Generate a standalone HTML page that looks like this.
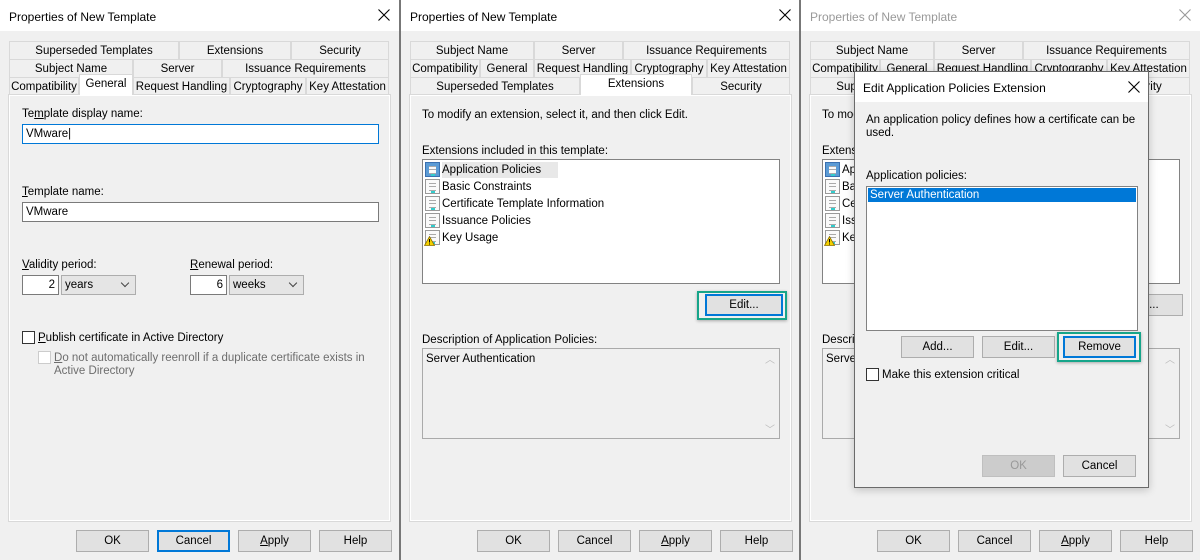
<!DOCTYPE html>
<html><head><meta charset="utf-8"><style>
*{box-sizing:border-box;margin:0;padding:0}
body{width:1200px;height:560px;position:relative;background:#f0f0f0;font-family:"Liberation Sans",sans-serif;font-size:11.5px;color:#000;overflow:hidden}
.a{position:absolute}
.win{position:absolute;top:0;height:560px;width:400px;background:#f0f0f0;border-right:1px solid #777}
.tb{position:absolute;left:0;top:0;width:100%;height:31px;background:#fff}
.tt{position:absolute;left:9px;top:10px;font-size:12px}
.x{position:absolute;top:9px;width:12px;height:12px}
.tab{position:absolute;height:18px;border:1px solid #d9d9d9;border-bottom:none;background:#f0f0f0;text-align:center;line-height:18px;white-space:nowrap}
.tab.sel{background:#fff;height:21px;border-color:#d9d9d9;z-index:2;line-height:18px}
.panel{position:absolute;border:1px solid #d9d9d9;box-shadow:inset 0 0 0 1px #fff;background:#f0f0f0}
.btn{position:absolute;height:22px;border:1px solid #adadad;background:#e1e1e1;text-align:center;line-height:21px}
.btn.def{border:2px solid #0078d7;line-height:19px}
.inp{position:absolute;height:20px;border:1px solid #7a7a7a;background:#fff;padding-left:3px;line-height:19px}
.sel2{position:absolute;height:20px;border:1px solid #adadad;background:#e5e5e5;padding-left:3px;line-height:19px}
.sel2:after{content:"";position:absolute;right:7px;top:4px;width:5px;height:5px;border-right:1px solid #444;border-bottom:1px solid #444;transform:rotate(45deg)}
.lb{position:absolute;border:1px solid #828282;background:#fff}
.cb{position:absolute;width:13px;height:13px;border:1px solid #333;background:#fff}
.ic{position:absolute;width:15px;height:15px;border:1px solid #999;background:#fafafa}
.ic:before{content:"";position:absolute;left:3px;top:3px;width:7px;height:6px;border-top:1px solid #aaa;border-bottom:1px solid #aaa;background:linear-gradient(#fafafa 2px,#aaa 2px,#aaa 3px,#fafafa 3px)}
.ic:after{content:"";position:absolute;left:5px;bottom:0;width:4px;height:2px;background:#3cc}
.ic.blue{background:#5b9bd5;border-color:#3a70b0}
.warn{position:absolute;width:11px;height:10px}
.teal{position:absolute;border:2px solid #16a58a;box-shadow:0 1px 3px rgba(0,0,0,.3)}
u{text-decoration:underline}
</style></head><body>

<!-- WINDOW 1 -->
<div class="win" style="left:0">
 <div class="tb"><div class="tt">Properties of New Template</div><svg class="x" style="left:378px" viewBox="0 0 12 12"><path d="M0.5 0.5L11.5 11.5M11.5 0.5L0.5 11.5" stroke="#000" stroke-width="1.1"/></svg></div>
 <div class="tab" style="left:9px;top:41px;width:170px">Superseded Templates</div>
 <div class="tab" style="left:179px;top:41px;width:112px">Extensions</div>
 <div class="tab" style="left:291px;top:41px;width:98px">Security</div>
 <div class="tab" style="left:9px;top:59px;width:124px">Subject Name</div>
 <div class="tab" style="left:133px;top:59px;width:89px">Server</div>
 <div class="tab" style="left:222px;top:59px;width:167px">Issuance Requirements</div>
 <div class="tab" style="left:9px;top:77px;width:70px">Compatibility</div>
 <div class="tab sel" style="left:79px;top:74px;width:54px">General</div>
 <div class="tab" style="left:133px;top:77px;width:97px">Request Handling</div>
 <div class="tab" style="left:230px;top:77px;width:76px">Cryptography</div>
 <div class="tab" style="left:306px;top:77px;width:83px">Key Attestation</div>
 <div class="panel" style="left:8px;top:94px;width:383px;height:428px"></div>
 <div class="a" style="left:22px;top:108px">Te<u>m</u>plate display name:</div>
 <div class="inp" style="left:22px;top:124px;width:357px;border-color:#0078d7">VMware|</div>
 <div class="a" style="left:22px;top:186px"><u>T</u>emplate name:</div>
 <div class="inp" style="left:22px;top:202px;width:357px">VMware</div>
 <div class="a" style="left:22px;top:259px"><u>V</u>alidity period:</div>
 <div class="inp" style="left:22px;top:275px;width:37px;text-align:right;padding-right:3px">2</div>
 <div class="sel2" style="left:61px;top:275px;width:75px">years</div>
 <div class="a" style="left:190px;top:259px"><u>R</u>enewal period:</div>
 <div class="inp" style="left:190px;top:275px;width:37px;text-align:right;padding-right:3px">6</div>
 <div class="sel2" style="left:229px;top:275px;width:75px">weeks</div>
 <div class="cb" style="left:22px;top:331px"></div>
 <div class="a" style="left:38px;top:332px"><u>P</u>ublish certificate in Active Directory</div>
 <div class="cb" style="left:38px;top:351px;border-color:#ccc"></div>
 <div class="a" style="left:54px;top:352px;color:#6d6d6d;line-height:13px;width:330px"><u>D</u>o not automatically reenroll if a duplicate certificate exists in Active Directory</div>
 <div class="btn" style="left:76px;top:530px;width:73px">OK</div>
 <div class="btn def" style="left:157px;top:530px;width:73px">Cancel</div>
 <div class="btn" style="left:238px;top:530px;width:73px"><u>A</u>pply</div>
 <div class="btn" style="left:319px;top:530px;width:73px">Help</div>
</div>

<!-- WINDOW 2 -->
<div class="win" style="left:400px;border-left:1px solid #777">
 <div class="tb"><div class="tt">Properties of New Template</div><svg class="x" style="left:378px" viewBox="0 0 12 12"><path d="M0.5 0.5L11.5 11.5M11.5 0.5L0.5 11.5" stroke="#000" stroke-width="1.1"/></svg></div>
 <div class="tab" style="left:9px;top:41px;width:124px">Subject Name</div>
 <div class="tab" style="left:133px;top:41px;width:89px">Server</div>
 <div class="tab" style="left:222px;top:41px;width:167px">Issuance Requirements</div>
 <div class="tab" style="left:9px;top:59px;width:70px">Compatibility</div>
 <div class="tab" style="left:79px;top:59px;width:54px">General</div>
 <div class="tab" style="left:133px;top:59px;width:97px">Request Handling</div>
 <div class="tab" style="left:230px;top:59px;width:76px">Cryptography</div>
 <div class="tab" style="left:306px;top:59px;width:83px">Key Attestation</div>
 <div class="tab" style="left:9px;top:77px;width:170px">Superseded Templates</div>
 <div class="tab sel" style="left:179px;top:74px;width:112px">Extensions</div>
 <div class="tab" style="left:291px;top:77px;width:98px">Security</div>
 <div class="panel" style="left:8px;top:94px;width:383px;height:428px"></div>
 <div class="a" style="left:21px;top:109px">To modify an extension, select it, and then click Edit.</div>
 <div class="a" style="left:21px;top:145px">Extensions included in this template:</div>
 <div class="lb" style="left:21px;top:159px;width:358px;height:125px">
  <div class="a" style="left:19px;top:2px;width:116px;height:16px;background:#e8e8e8"></div>
  <div class="ic blue" style="left:2px;top:2px"></div><div class="a" style="left:19px;top:4px">Application Policies</div>
  <div class="ic" style="left:2px;top:19px"></div><div class="a" style="left:19px;top:21px">Basic Constraints</div>
  <div class="ic" style="left:2px;top:36px"></div><div class="a" style="left:19px;top:38px">Certificate Template Information</div>
  <div class="ic" style="left:2px;top:53px"></div><div class="a" style="left:19px;top:55px">Issuance Policies</div>
  <div class="ic" style="left:2px;top:70px"></div><svg class="warn" style="left:1px;top:76px" viewBox="0 0 11 10"><path d="M5.5 0.5L10.5 9.5H0.5Z" fill="#f5d000" stroke="#8a7000" stroke-width="0.8"/><path d="M5.5 3v3.5M5.5 7.5v1" stroke="#000" stroke-width="1"/></svg><div class="a" style="left:19px;top:72px">Key Usage</div>
 </div>
 <div class="teal" style="left:296px;top:291px;width:90px;height:29px"></div>
 <div class="btn def" style="left:304px;top:294px;width:78px">Edit...</div>
 <div class="a" style="left:21px;top:334px">Description of Application Policies:</div>
 <div class="lb" style="left:21px;top:348px;width:358px;height:91px;border-color:#aaa;background:#f0f0f0">
  <div class="a" style="left:3px;top:4px">Server Authentication</div>
  <div class="a" style="right:4px;top:2px;color:#bbb;font-size:10px">︿</div>
  <div class="a" style="right:4px;bottom:2px;color:#bbb;font-size:10px">﹀</div>
 </div>
 <div class="btn" style="left:76px;top:530px;width:73px">OK</div>
 <div class="btn" style="left:157px;top:530px;width:73px">Cancel</div>
 <div class="btn" style="left:238px;top:530px;width:73px"><u>A</u>pply</div>
 <div class="btn" style="left:319px;top:530px;width:73px">Help</div>
</div>

<!-- WINDOW 3 -->
<div class="win" style="left:800px;border-left:1px solid #777;border-right:none">
 <div class="tb"><div class="tt" style="color:#999">Properties of New Template</div><svg class="x" style="left:378px" viewBox="0 0 12 12"><path d="M0.5 0.5L11.5 11.5M11.5 0.5L0.5 11.5" stroke="#999" stroke-width="1.1"/></svg></div>
 <div class="tab" style="left:9px;top:41px;width:124px">Subject Name</div>
 <div class="tab" style="left:133px;top:41px;width:89px">Server</div>
 <div class="tab" style="left:222px;top:41px;width:167px">Issuance Requirements</div>
 <div class="tab" style="left:9px;top:59px;width:70px">Compatibility</div>
 <div class="tab" style="left:79px;top:59px;width:54px">General</div>
 <div class="tab" style="left:133px;top:59px;width:97px">Request Handling</div>
 <div class="tab" style="left:230px;top:59px;width:76px">Cryptography</div>
 <div class="tab" style="left:306px;top:59px;width:83px">Key Attestation</div>
 <div class="tab" style="left:9px;top:77px;width:170px">Superseded Templates</div>
 <div class="tab sel" style="left:179px;top:74px;width:112px">Extensions</div>
 <div class="tab" style="left:291px;top:77px;width:98px">Security</div>
 <div class="panel" style="left:8px;top:94px;width:383px;height:428px"></div>
 <div class="a" style="left:21px;top:109px">To modify</div>
 <div class="a" style="left:21px;top:145px">Extensions</div>
 <div class="lb" style="left:21px;top:159px;width:358px;height:125px">
  <div class="ic blue" style="left:2px;top:2px"></div><div class="a" style="left:19px;top:4px">Ap</div>
  <div class="ic" style="left:2px;top:19px"></div><div class="a" style="left:19px;top:21px">Ba</div>
  <div class="ic" style="left:2px;top:36px"></div><div class="a" style="left:19px;top:38px">Ce</div>
  <div class="ic" style="left:2px;top:53px"></div><div class="a" style="left:19px;top:55px">Iss</div>
  <div class="ic" style="left:2px;top:70px"></div><svg class="warn" style="left:1px;top:76px" viewBox="0 0 11 10"><path d="M5.5 0.5L10.5 9.5H0.5Z" fill="#f5d000" stroke="#8a7000" stroke-width="0.8"/><path d="M5.5 3v3.5M5.5 7.5v1" stroke="#000" stroke-width="1"/></svg><div class="a" style="left:19px;top:72px">Ke</div>
 </div>
 <div class="btn" style="left:304px;top:294px;width:78px">Edit...</div>
 <div class="a" style="left:21px;top:334px">Description</div>
 <div class="lb" style="left:21px;top:348px;width:358px;height:91px;border-color:#aaa;background:#f0f0f0">
  <div class="a" style="left:3px;top:4px">Server</div>
  <div class="a" style="right:4px;top:2px;color:#bbb;font-size:10px">︿</div>
  <div class="a" style="right:4px;bottom:2px;color:#bbb;font-size:10px">﹀</div>
 </div>
 <div class="btn" style="left:76px;top:530px;width:73px">OK</div>
 <div class="btn" style="left:157px;top:530px;width:73px">Cancel</div>
 <div class="btn" style="left:238px;top:530px;width:73px"><u>A</u>pply</div>
 <div class="btn" style="left:319px;top:530px;width:73px">Help</div>

 <!-- modal -->
 <div class="a" style="left:53px;top:71px;width:295px;height:417px;background:#f0f0f0;border:1px solid #6a6a6a;z-index:5;box-shadow:0 2px 8px rgba(0,0,0,.2)">
  <div class="a" style="left:0;top:0;width:293px;height:30px;background:#fff"></div>
  <div class="a" style="left:8px;top:9px;font-size:12px">Edit Application Policies Extension</div>
  <svg class="a" style="left:273px;top:9px;width:12px;height:12px" viewBox="0 0 12 12"><path d="M0.5 0.5L11.5 11.5M11.5 0.5L0.5 11.5" stroke="#000" stroke-width="1.1"/></svg>
  <div class="a" style="left:11px;top:42px;width:275px;line-height:13px">An application policy defines how a certificate can be used.</div>
  <div class="a" style="left:11px;top:98px">Application policies:</div>
  <div class="lb" style="left:11px;top:114px;width:272px;height:145px">
   <div class="a" style="left:1px;top:1px;width:268px;height:14px;background:#0078d7;color:#fff;padding-left:2px;line-height:14px">Server Authentication</div>
  </div>
  <div class="btn" style="left:46px;top:264px;width:73px">Add...</div>
  <div class="btn" style="left:127px;top:264px;width:73px">Edit...</div>
  <div class="teal" style="left:202px;top:260px;width:84px;height:30px"></div>
  <div class="btn def" style="left:208px;top:264px;width:73px">Remove</div>
  <div class="cb" style="left:11px;top:296px"></div>
  <div class="a" style="left:27px;top:297px">Make this extension critical</div>
  <div class="btn" style="left:127px;top:383px;width:73px;color:#999;background:#ccc;border-color:#bfbfbf">OK</div>
  <div class="btn" style="left:208px;top:383px;width:73px">Cancel</div>
 </div>
</div>
</body></html>
